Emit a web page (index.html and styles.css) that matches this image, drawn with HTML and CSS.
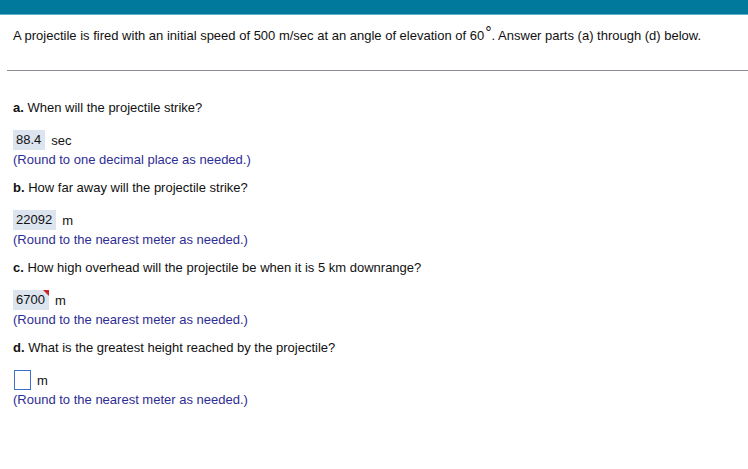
FILE: index.html
```html
<!DOCTYPE html>
<html>
<head>
<meta charset="utf-8">
<link rel="stylesheet" href="styles.css">
</head>
<body>
<div class="topbar"></div>
<div class="intro">A projectile is fired with an initial speed of 500 m/sec at an angle of elevation of 60<span class="deg">°</span>. Answer parts (a) through (d) below.</div>
<div class="rule"></div>
<div class="parts">
  <div class="part">
    <div class="q"><b>a.</b> When will the projectile strike?</div>
    <div class="ans"><span class="box">88.4</span><span class="unit">sec</span></div>
    <div class="hint">(Round to one decimal place as needed.)</div>
  </div>
  <div class="part">
    <div class="q"><b>b.</b> How far away will the projectile strike?</div>
    <div class="ans"><span class="box">22092</span><span class="unit">m</span></div>
    <div class="hint">(Round to the nearest meter as needed.)</div>
  </div>
  <div class="part">
    <div class="q"><b>c.</b> How high overhead will the projectile be when it is 5 km downrange?</div>
    <div class="ans"><span class="box flag">6700</span><span class="unit">m</span></div>
    <div class="hint">(Round to the nearest meter as needed.)</div>
  </div>
  <div class="part">
    <div class="q"><b>d.</b> What is the greatest height reached by the projectile?</div>
    <div class="ans"><span class="empty"></span><span class="unit">m</span></div>
    <div class="hint">(Round to the nearest meter as needed.)</div>
  </div>
</div>
</body>
</html>
```
FILE: styles.css
```css
html, body {
  margin: 0;
  padding: 0;
  background: #ffffff;
}
body {
  font-family: "Liberation Sans", Arial, sans-serif;
  font-size: 13px;
  color: #111111;
}
.topbar {
  height: 14px;
  background: #00799c;
  border-bottom: 1px solid #5fb0cb;
}
.intro {
  padding: 12px 13px 0 13px;
  line-height: 16px;
  height: 43px;
}
.deg {
  font-size: 16px;
  position: relative;
  top: -2px;
  margin-left: 1px;
}
.rule {
  margin-left: 7px;
  height: 1px;
  background: #8a8f96;
}
.parts {
  padding: 29px 0 0 13px;
}
.part {
  margin-bottom: 12px;
}
.q {
  line-height: 16px;
}
.q b {
  font-weight: bold;
}
.ans {
  display: flex;
  align-items: center;
  margin-top: 14px;
  height: 20px;
}
.box {
  position: relative;
  background: #dce4ef;
  padding: 0 4px 0 3px;
  line-height: 20px;
  height: 20px;
}
.flag::after {
  content: "";
  position: absolute;
  top: 0;
  right: 0;
  width: 0;
  height: 0;
  border-top: 6px solid #c8242a;
  border-left: 6px solid transparent;
}
.empty {
  box-sizing: border-box;
  width: 17px;
  height: 20px;
  border: 1px solid #3a70c8;
  margin-left: 1px;
}
.unit {
  margin-left: 6px;
}
.hint {
  color: #2e2d94;
  line-height: 16px;
  margin-top: 2px;
}
```
